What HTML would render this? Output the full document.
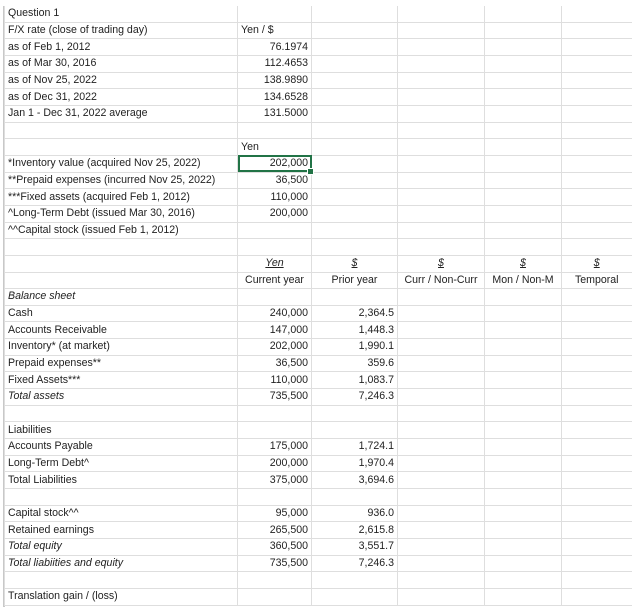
<!DOCTYPE html>
<html><head><meta charset="utf-8"><style>
body{margin:0;background:#fff;width:639px;height:614px;overflow:hidden;font-family:"Liberation Sans",sans-serif;font-size:10.6px;color:#222}
table{position:absolute;left:4px;top:6px;border-collapse:collapse;table-layout:fixed;width:627px}
td{height:15.67px;border:1px solid #dedede;padding:0 3px;white-space:nowrap;overflow:visible;line-height:15px}
tr:first-child td{border-top:none}
td:last-child{border-right:none}
td.r{text-align:right}
td.c{text-align:center}
.i{font-style:italic}
.u{text-decoration:underline;font-style:italic}
.lb{position:absolute;left:3px;top:6px;width:2px;height:601px;background:#c8c8c8}
.sel{outline:2px solid #217346;outline-offset:-2px;position:relative}
.sel:after{content:"";position:absolute;right:-3px;bottom:-3px;width:5px;height:5px;background:#217346;border:1px solid #fff}
</style></head><body>
<div class="lb"></div>
<table>
<colgroup><col style="width:233px"><col style="width:74px"><col style="width:86px"><col style="width:87px"><col style="width:77px"><col style="width:70px"></colgroup>
<tr><td>Question 1</td><td></td><td></td><td></td><td></td><td></td></tr>
<tr><td>F/X rate (close of trading day)</td><td>Yen / $</td><td></td><td></td><td></td><td></td></tr>
<tr><td>as of Feb 1, 2012</td><td class="r">76.1974</td><td></td><td></td><td></td><td></td></tr>
<tr><td>as of Mar 30, 2016</td><td class="r">112.4653</td><td></td><td></td><td></td><td></td></tr>
<tr><td>as of Nov 25, 2022</td><td class="r">138.9890</td><td></td><td></td><td></td><td></td></tr>
<tr><td>as of Dec 31, 2022</td><td class="r">134.6528</td><td></td><td></td><td></td><td></td></tr>
<tr><td>Jan 1 - Dec 31, 2022 average</td><td class="r">131.5000</td><td></td><td></td><td></td><td></td></tr>
<tr><td></td><td></td><td></td><td></td><td></td><td></td></tr>
<tr><td></td><td>Yen</td><td></td><td></td><td></td><td></td></tr>
<tr><td>*Inventory value (acquired Nov 25, 2022)</td><td class="r sel">202,000</td><td></td><td></td><td></td><td></td></tr>
<tr><td>**Prepaid expenses (incurred Nov 25, 2022)</td><td class="r">36,500</td><td></td><td></td><td></td><td></td></tr>
<tr><td>***Fixed assets (acquired Feb 1, 2012)</td><td class="r">110,000</td><td></td><td></td><td></td><td></td></tr>
<tr><td>^Long-Term Debt (issued Mar 30, 2016)</td><td class="r">200,000</td><td></td><td></td><td></td><td></td></tr>
<tr><td>^^Capital stock (issued Feb 1, 2012)</td><td></td><td></td><td></td><td></td><td></td></tr>
<tr><td></td><td></td><td></td><td></td><td></td><td></td></tr>
<tr><td></td><td class="c"><span class="u">Yen</span></td><td class="c"><span class="u">$</span></td><td class="c"><span class="u">$</span></td><td class="c"><span class="u">$</span></td><td class="c"><span class="u">$</span></td></tr>
<tr><td></td><td class="c">Current year</td><td class="c">Prior year</td><td class="c">Curr / Non-Curr</td><td class="c">Mon / Non-M</td><td class="c">Temporal</td></tr>
<tr><td class="i">Balance sheet</td><td></td><td></td><td></td><td></td><td></td></tr>
<tr><td>Cash</td><td class="r">240,000</td><td class="r">2,364.5</td><td></td><td></td><td></td></tr>
<tr><td>Accounts Receivable</td><td class="r">147,000</td><td class="r">1,448.3</td><td></td><td></td><td></td></tr>
<tr><td>Inventory* (at market)</td><td class="r">202,000</td><td class="r">1,990.1</td><td></td><td></td><td></td></tr>
<tr><td>Prepaid expenses**</td><td class="r">36,500</td><td class="r">359.6</td><td></td><td></td><td></td></tr>
<tr><td>Fixed Assets***</td><td class="r">110,000</td><td class="r">1,083.7</td><td></td><td></td><td></td></tr>
<tr><td class="i">Total assets</td><td class="r">735,500</td><td class="r">7,246.3</td><td></td><td></td><td></td></tr>
<tr><td></td><td></td><td></td><td></td><td></td><td></td></tr>
<tr><td>Liabilities</td><td></td><td></td><td></td><td></td><td></td></tr>
<tr><td>Accounts Payable</td><td class="r">175,000</td><td class="r">1,724.1</td><td></td><td></td><td></td></tr>
<tr><td>Long-Term Debt^</td><td class="r">200,000</td><td class="r">1,970.4</td><td></td><td></td><td></td></tr>
<tr><td>Total Liabilities</td><td class="r">375,000</td><td class="r">3,694.6</td><td></td><td></td><td></td></tr>
<tr><td></td><td></td><td></td><td></td><td></td><td></td></tr>
<tr><td>Capital stock^^</td><td class="r">95,000</td><td class="r">936.0</td><td></td><td></td><td></td></tr>
<tr><td>Retained earnings</td><td class="r">265,500</td><td class="r">2,615.8</td><td></td><td></td><td></td></tr>
<tr><td class="i">Total equity</td><td class="r">360,500</td><td class="r">3,551.7</td><td></td><td></td><td></td></tr>
<tr><td class="i">Total liabiities and equity</td><td class="r">735,500</td><td class="r">7,246.3</td><td></td><td></td><td></td></tr>
<tr><td></td><td></td><td></td><td></td><td></td><td></td></tr>
<tr><td>Translation gain / (loss)</td><td></td><td></td><td></td><td></td><td></td></tr>
</table>
</body></html>
